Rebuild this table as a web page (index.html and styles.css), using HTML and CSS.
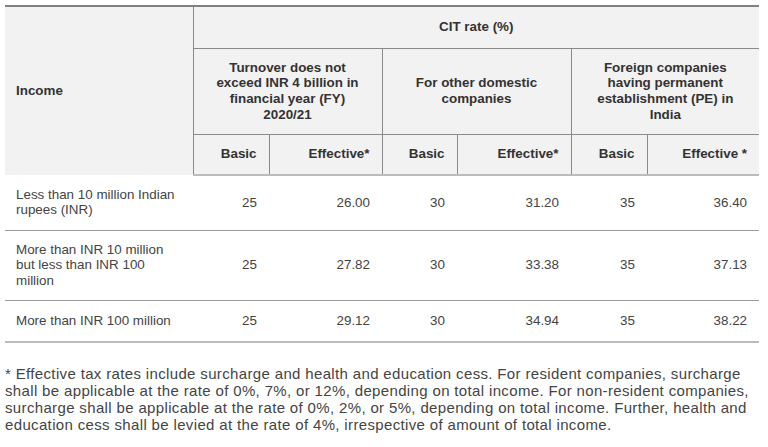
FILE: index.html
```html
<!DOCTYPE html>
<html lang="en">
<head>
    <meta charset="UTF-8">
    <meta name="viewport" content="width=device-width, initial-scale=1.0">
    <title>CIT rates</title>
    <link rel="stylesheet" href="styles.css">
</head>
<body>
    <!-- Rates table -->
    <table class="rates">
        <colgroup>
            <col class="col-income">
            <col class="col-basic">
            <col class="col-eff">
            <col class="col-basic2">
            <col class="col-eff2">
            <col class="col-basic">
            <col class="col-eff3">
        </colgroup>
        <thead>
            <tr class="row-top">
                <th class="income-head" rowspan="3">Income</th>
                <th class="group" colspan="6">CIT rate (%)</th>
            </tr>
            <tr class="row-groups">
                <th class="group" colspan="2">Turnover does not exceed INR 4 billion in financial year (FY) 2020/21</th>
                <th class="group" colspan="2">For other domestic companies</th>
                <th class="group" colspan="2">Foreign companies having permanent establishment (PE) in India</th>
            </tr>
            <tr class="row-sub">
                <th class="num">Basic</th>
                <th class="num">Effective*</th>
                <th class="num">Basic</th>
                <th class="num">Effective*</th>
                <th class="num">Basic</th>
                <th class="num">Effective *</th>
            </tr>
        </thead>
        <tbody>
            <tr class="row-a">
                <td class="label">Less than 10 million Indian rupees (INR)</td>
                <td class="num">25</td>
                <td class="num">26.00</td>
                <td class="num">30</td>
                <td class="num">31.20</td>
                <td class="num">35</td>
                <td class="num">36.40</td>
            </tr>
            <tr class="row-b">
                <td class="label">More than INR 10 million but less than INR 100 million</td>
                <td class="num">25</td>
                <td class="num">27.82</td>
                <td class="num">30</td>
                <td class="num">33.38</td>
                <td class="num">35</td>
                <td class="num">37.13</td>
            </tr>
            <tr class="row-c">
                <td class="label">More than INR 100 million</td>
                <td class="num">25</td>
                <td class="num">29.12</td>
                <td class="num">30</td>
                <td class="num">34.94</td>
                <td class="num">35</td>
                <td class="num">38.22</td>
            </tr>
        </tbody>
    </table>

    <!-- Footnote -->
    <p class="note">* Effective tax rates include surcharge and health and education cess. For resident companies, surcharge shall be applicable at the rate of 0%, 7%, or 12%, depending on total income. For non-resident companies, surcharge shall be applicable at the rate of 0%, 2%, or 5%, depending on total income. Further, health and education cess shall be levied at the rate of 4%, irrespective of amount of total income.</p>
</body>
</html>
```

FILE: styles.css
```css
* {
    margin: 0;
    padding: 0;
    box-sizing: border-box;
}

body {
    padding: 5px;
    background: #fff;
    font-family: 'Liberation Sans', Arial, sans-serif;
    color: #444;
}

/* Rates table */
.rates {
    width: 754px;
    border-collapse: collapse;
    table-layout: fixed;
    font-size: 13.4px;
    line-height: 15.6px;
    border-top: 2px solid #808080;
    border-bottom: 2px solid #bcbcbc;
}

.col-income { width: 188px; }
.col-basic { width: 76px; }
.col-eff { width: 113px; }
.col-basic2 { width: 75px; }
.col-eff2 { width: 114px; }
.col-eff3 { width: 112px; }

.rates th {
    background: #f2f2f2;
    color: #333;
    font-weight: bold;
}

.rates th,
.rates td {
    padding: 0 12px 0 11px;
    vertical-align: middle;
}

.income-head {
    text-align: left;
    border-right: 1px solid #8a8a8a;
}

.group {
    text-align: center;
    border-bottom: 1px solid #8a8a8a;
    border-left: 1px solid #8a8a8a;
}

.rates th.group {
    padding: 0 20px;
}

.row-top { height: 42px; }
.row-groups { height: 86px; }
.row-sub { height: 41px; }

.row-sub th {
    border-left: 1px solid #8a8a8a;
    border-bottom: 2px solid #bcbcbc;
}

.num {
    text-align: right;
}

.rates td.label {
    text-align: left;
}

.rates tbody tr {
    border-top: 1px solid #9a9a9a;
}

.rates tbody tr:first-child {
    border-top: none;
}

.row-a { height: 55px; }
.row-b { height: 70px; }
.row-c { height: 42px; }

/* Footnote */
.note {
    width: 754px;
    margin-top: 22px;
    font-size: 15px;
    line-height: 17px;
    letter-spacing: 0.35px;
    color: #444;
}
```
